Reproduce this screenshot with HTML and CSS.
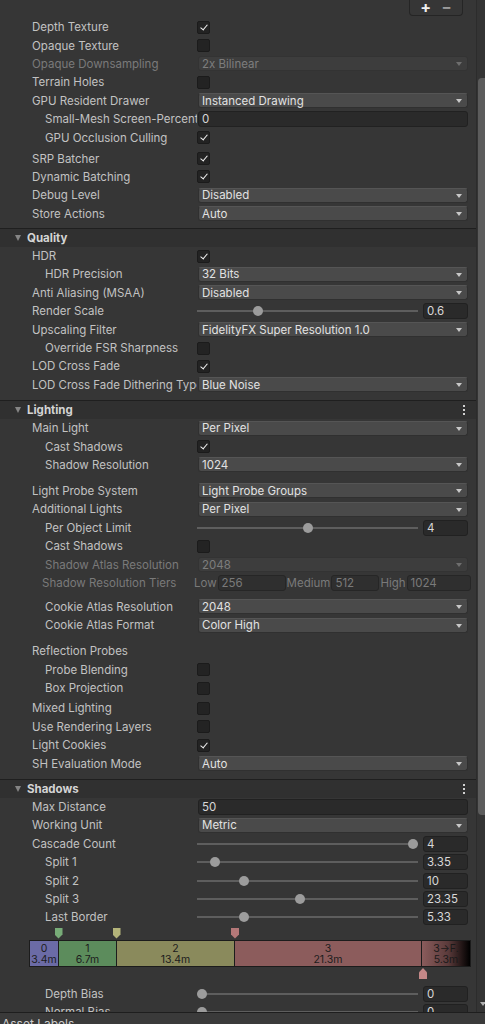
FILE: index.html
```html
<!DOCTYPE html>
<html>
<head>
<meta charset="utf-8">
<link rel="stylesheet" href="styles.css">
</head>
<body>
<div class="window">
  <div class="main">
    <div class="content">
      <div class="toolbar"><div class="addrem"><span class="plus">+</span><span class="minus">&minus;</span></div></div>

      <div class="row"><span class="label">Depth Texture</span><span class="ctrl"><span class="check on"></span></span></div>
      <div class="row"><span class="label">Opaque Texture</span><span class="ctrl"><span class="check"></span></span></div>
      <div class="row dis"><span class="label">Opaque Downsampling</span><span class="ctrl"><span class="dd">2x Bilinear</span></span></div>
      <div class="row"><span class="label">Terrain Holes</span><span class="ctrl"><span class="check"></span></span></div>
      <div class="row"><span class="label">GPU Resident Drawer</span><span class="ctrl"><span class="dd">Instanced Drawing</span></span></div>
      <div class="row"><span class="label ind">Small-Mesh Screen-Percentage</span><span class="ctrl"><span class="field">0</span></span></div>
      <div class="row"><span class="label ind">GPU Occlusion Culling</span><span class="ctrl"><span class="check on"></span></span></div>
      <div class="sp sp3"></div>
      <div class="row"><span class="label">SRP Batcher</span><span class="ctrl"><span class="check on"></span></span></div>
      <div class="row"><span class="label">Dynamic Batching</span><span class="ctrl"><span class="check on"></span></span></div>
      <div class="row"><span class="label">Debug Level</span><span class="ctrl"><span class="dd">Disabled</span></span></div>
      <div class="row"><span class="label">Store Actions</span><span class="ctrl"><span class="dd">Auto</span></span></div>

      <div class="sp sp5"></div>
      <div class="header"><span class="tri"></span><span class="htitle">Quality</span></div>
      <div class="row"><span class="label">HDR</span><span class="ctrl"><span class="check on"></span></span></div>
      <div class="row"><span class="label ind">HDR Precision</span><span class="ctrl"><span class="dd">32 Bits</span></span></div>
      <div class="row"><span class="label">Anti Aliasing (MSAA)</span><span class="ctrl"><span class="dd">Disabled</span></span></div>
      <div class="row"><span class="label">Render Scale</span><span class="ctrl"><span class="slider"><span class="track"><span class="knob" style="--p:0.264"></span></span></span><span class="num">0.6</span></span></div>
      <div class="row"><span class="label">Upscaling Filter</span><span class="ctrl"><span class="dd">FidelityFX Super Resolution 1.0</span></span></div>
      <div class="row"><span class="label ind">Override FSR Sharpness</span><span class="ctrl"><span class="check"></span></span></div>
      <div class="row"><span class="label">LOD Cross Fade</span><span class="ctrl"><span class="check on"></span></span></div>
      <div class="row"><span class="label">LOD Cross Fade Dithering Type</span><span class="ctrl"><span class="dd">Blue Noise</span></span></div>

      <div class="sp sp6"></div>
      <div class="header"><span class="tri"></span><span class="htitle">Lighting</span><span class="kebab"><i></i><i></i><i></i></span></div>
      <div class="row"><span class="label">Main Light</span><span class="ctrl"><span class="dd">Per Pixel</span></span></div>
      <div class="row"><span class="label ind">Cast Shadows</span><span class="ctrl"><span class="check on"></span></span></div>
      <div class="row"><span class="label ind">Shadow Resolution</span><span class="ctrl"><span class="dd">1024</span></span></div>
      <div class="sp sp8"></div>
      <div class="row"><span class="label">Light Probe System</span><span class="ctrl"><span class="dd">Light Probe Groups</span></span></div>
      <div class="row"><span class="label">Additional Lights</span><span class="ctrl"><span class="dd">Per Pixel</span></span></div>
      <div class="row"><span class="label ind">Per Object Limit</span><span class="ctrl"><span class="slider"><span class="track"><span class="knob" style="--p:0.5"></span></span></span><span class="num">4</span></span></div>
      <div class="row"><span class="label ind">Cast Shadows</span><span class="ctrl"><span class="check"></span></span></div>
      <div class="row dis"><span class="label ind">Shadow Atlas Resolution</span><span class="ctrl"><span class="dd">2048</span></span></div>
      <div class="row dis tiers"><span class="label tlabel">Shadow Resolution Tiers</span>
        <span class="tctrl"><span class="tl">Low</span><span class="tf tf1">256</span><span class="tl">Medium</span><span class="tf tf2">512</span><span class="tl">High</span><span class="tf tf3">1024</span></span></div>
      <div class="sp sp6b"></div>
      <div class="row"><span class="label ind">Cookie Atlas Resolution</span><span class="ctrl"><span class="dd">2048</span></span></div>
      <div class="row"><span class="label ind">Cookie Atlas Format</span><span class="ctrl"><span class="dd">Color High</span></span></div>
      <div class="sp sp8"></div>
      <div class="row"><span class="label">Reflection Probes</span><span class="ctrl"></span></div>
      <div class="row"><span class="label ind">Probe Blending</span><span class="ctrl"><span class="check"></span></span></div>
      <div class="row"><span class="label ind">Box Projection</span><span class="ctrl"><span class="check"></span></span></div>
      <div class="sp sp2"></div>
      <div class="row"><span class="label">Mixed Lighting</span><span class="ctrl"><span class="check"></span></span></div>
      <div class="row"><span class="label">Use Rendering Layers</span><span class="ctrl"><span class="check"></span></span></div>
      <div class="row"><span class="label">Light Cookies</span><span class="ctrl"><span class="check on"></span></span></div>
      <div class="row"><span class="label">SH Evaluation Mode</span><span class="ctrl"><span class="dd">Auto</span></span></div>

      <div class="sp sp6"></div>
      <div class="header"><span class="tri"></span><span class="htitle">Shadows</span><span class="kebab"><i></i><i></i><i></i></span></div>
      <div class="row"><span class="label">Max Distance</span><span class="ctrl"><span class="field">50</span></span></div>
      <div class="row"><span class="label">Working Unit</span><span class="ctrl"><span class="dd">Metric</span></span></div>
      <div class="row"><span class="label">Cascade Count</span><span class="ctrl"><span class="slider"><span class="track"><span class="knob" style="--p:1"></span></span></span><span class="num">4</span></span></div>
      <div class="row"><span class="label ind">Split 1</span><span class="ctrl"><span class="slider"><span class="track"><span class="knob" style="--p:0.062"></span></span></span><span class="num">3.35</span></span></div>
      <div class="row"><span class="label ind">Split 2</span><span class="ctrl"><span class="slider"><span class="track"><span class="knob" style="--p:0.198"></span></span></span><span class="num">10</span></span></div>
      <div class="row"><span class="label ind">Split 3</span><span class="ctrl"><span class="slider"><span class="track"><span class="knob" style="--p:0.464"></span></span></span><span class="num">23.35</span></span></div>
      <div class="row"><span class="label ind">Last Border</span><span class="ctrl"><span class="slider"><span class="track"><span class="knob" style="--p:0.198"></span></span></span><span class="num">5.33</span></span></div>

      <div class="cascade">
        <div class="mrow">
          <span class="mk mk-g" style="left:25.5px"></span>
          <span class="mk mk-y" style="left:83.5px"></span>
          <span class="mk mk-r" style="left:202px"></span>
        </div>
        <div class="cbar">
          <div class="seg s0"><span>0</span><span>3.4m</span></div>
          <div class="seg s1"><span>1</span><span>6.7m</span></div>
          <div class="seg s2"><span>2</span><span>13.4m</span></div>
          <div class="seg s3"><span>3</span><span>21.3m</span></div>
          <div class="seg s4"><span>3&rarr;F.</span><span>5.3m</span></div>
        </div>
        <div class="mrow">
          <span class="mk mk-p up" style="left:390px"></span>
        </div>
      </div>

      <div class="row"><span class="label ind">Depth Bias</span><span class="ctrl"><span class="slider"><span class="track"><span class="knob" style="--p:0"></span></span></span><span class="num">0</span></span></div>
      <div class="row"><span class="label ind">Normal Bias</span><span class="ctrl"><span class="slider"><span class="track"><span class="knob" style="--p:0"></span></span></span><span class="num">0</span></span></div>
    </div>
    <div class="scrollbar"><div class="thumb"></div><div class="down"></div></div>
  </div>
  <div class="footer">Asset Labels</div>
</div>
</body>
</html>
```

FILE: styles.css
```css
html, body {
  margin: 0;
  padding: 0;
  background: #363636;
}
body {
  font-family: "Inter", "Noto Sans", "Liberation Sans", sans-serif;
  font-size: 11.5px;
  color: #c2c2c2;
}
.window {
  width: 485px;
  height: 1024px;
  overflow: hidden;
  display: flex;
  flex-direction: column;
}
.main {
  height: 1012px;
  display: flex;
  overflow: hidden;
  flex: none;
}
.content {
  width: 476px;
  flex: none;
  overflow: hidden;
}
.scrollbar {
  width: 9px;
  flex: none;
  border-left: 1px solid #2c2c2c;
  box-sizing: border-box;
  position: relative;
  background: #343434;
}
.thumb {
  margin-top: 78px;
  margin-left: 1px;
  height: 737px;
  background: #5c5c5c;
  border-radius: 4px 0 0 4px;
}
.down {
  position: absolute;
  left: 3px;
  top: 1002px;
  width: 0;
  height: 0;
  border-left: 3px solid transparent;
  border-right: 3px solid transparent;
  border-top: 4px solid #b0b0b0;
}
.toolbar {
  height: 18px;
  display: flex;
  justify-content: flex-end;
  padding-right: 13px;
}
.addrem {
  width: 54px;
  height: 16px;
  box-sizing: border-box;
  border: 1px solid #252525;
  border-top: none;
  border-radius: 0 0 4px 4px;
  display: flex;
  align-items: center;
  justify-content: space-around;
  padding: 0 5px;
}
.plus {
  color: #f0f0f0;
  font-size: 16px;
  font-weight: 700;
  line-height: 14px;
  margin-top: -2px;
}
.minus {
  color: #9a9a9a;
  font-size: 15px;
  font-weight: 700;
  line-height: 14px;
  margin-top: -2px;
}
.row {
  height: 18.4px;
  display: flex;
  align-items: center;
}
.label {
  width: 197px;
  flex: none;
  box-sizing: border-box;
  padding-left: 32px;
  padding-right: 2px;
  white-space: nowrap;
  overflow: hidden;
}
.label.ind {
  padding-left: 45px;
}
.ctrl {
  width: 271px;
  flex: none;
  display: flex;
  align-items: center;
}
.check {
  width: 13px;
  height: 13px;
  box-sizing: border-box;
  background: #232323;
  border: 1px solid #1b1b1b;
  border-radius: 2px;
  position: relative;
}
.check.on::after {
  content: "";
  position: absolute;
  left: 3.5px;
  top: 1px;
  width: 3px;
  height: 6px;
  border: solid #f2f2f2;
  border-width: 0 1.6px 1.6px 0;
  transform: rotate(40deg);
}
.dd {
  width: 270px;
  height: 15px;
  box-sizing: border-box;
  margin-left: 1px;
  background: #4a4a4a;
  border: 1px solid #303030;
  border-top-color: #555555;
  border-radius: 3px;
  padding-left: 3px;
  color: #e2e2e2;
  display: flex;
  align-items: center;
  position: relative;
  white-space: nowrap;
}
.dd::after {
  content: "";
  position: absolute;
  right: 5px;
  top: 5px;
  border-left: 3.5px solid transparent;
  border-right: 3.5px solid transparent;
  border-top: 4px solid #c8c8c8;
}
.field {
  width: 270px;
  height: 16px;
  box-sizing: border-box;
  margin-left: 1px;
  background: #2a2a2a;
  border: 1px solid #212121;
  border-radius: 3px;
  padding-left: 3px;
  color: #d8d8d8;
  display: flex;
  align-items: center;
}
.slider {
  width: 221px;
  height: 12px;
  flex: none;
  display: flex;
  align-items: center;
}
.track {
  width: 100%;
  height: 2px;
  background: #5e5e5e;
  position: relative;
}
.knob {
  position: absolute;
  top: -4px;
  left: calc(var(--p) * (100% - 10px));
  width: 10px;
  height: 10px;
  border-radius: 50%;
  background: #9c9c9c;
}
.num {
  width: 45px;
  height: 16px;
  margin-left: 5px;
  box-sizing: border-box;
  background: #2a2a2a;
  border: 1px solid #212121;
  border-radius: 3px;
  padding-left: 3px;
  color: #d8d8d8;
  display: flex;
  align-items: center;
}
.dis .label,
.dis .tl {
  color: #7a7a7a;
}
.dis .dd {
  background: #3d3d3d;
  color: #7d7d7d;
  border-color: #333333;
}
.dis .dd::after {
  border-top-color: #6e6e6e;
}
.tlabel {
  padding-left: 42px;
  width: 194px;
}
.tctrl {
  display: flex;
  align-items: center;
  width: 277px;
  flex: none;
}
.tl {
  margin-right: 1px;
  white-space: nowrap;
  flex: none;
}
.tf {
  height: 16px;
  box-sizing: border-box;
  background: #2f2f2f;
  border: 1px solid #262626;
  border-radius: 3px;
  padding-left: 3px;
  color: #7a7a7a;
  display: flex;
  align-items: center;
  margin-right: 1px;
  flex: none;
}
.tf1 { width: 68px; }
.tf2 { width: 48px; }
.tf3 { flex: 1 1 auto; min-width: 0; margin-right: 0; }
.sp2 { height: 2px; }
.sp3 { height: 2.6px; }
.sp5 { height: 5px; }
.sp6 { height: 6px; }
.sp6b { height: 5.6px; }
.sp8 { height: 7.6px; }
.header {
  height: 18px;
  border-top: 1px solid #1f1f1f;
  background: #303030;
  display: flex;
  align-items: center;
  position: relative;
}
.tri {
  margin-left: 15px;
  width: 0;
  height: 0;
  border-left: 3.5px solid transparent;
  border-right: 3.5px solid transparent;
  border-top: 6px solid #858585;
}
.htitle {
  margin-left: 6px;
  font-weight: 700;
  font-size: 11.5px;
  color: #d4d4d4;
}
.kebab {
  margin-left: auto;
  margin-right: 11px;
  display: flex;
  flex-direction: column;
  gap: 2px;
}
.kebab i {
  display: block;
  width: 2px;
  height: 2px;
  background: #d0d0d0;
}
.cascade {
  height: 57.8px;
  padding-left: 29px;
  box-sizing: border-box;
}
.mrow {
  position: relative;
  height: 12.5px;
  width: 442px;
}
.mk {
  position: absolute;
  top: 1px;
  width: 8px;
  height: 11px;
  clip-path: polygon(0 0, 100% 0, 100% 62%, 50% 100%, 0 62%);
}
.mk.up {
  top: 1px;
  clip-path: polygon(50% 0, 100% 38%, 100% 100%, 0 100%, 0 38%);
}
.mk-g { background: #78ac78; }
.mk-y { background: #b4b47a; }
.mk-r { background: #b47878; }
.mk-p { background: #c48888; }
.cbar {
  margin-top: 1px;
  width: 442px;
  height: 27px;
  box-sizing: border-box;
  border: 1px solid #1c1c1c;
  background: #1c1c1c;
  display: flex;
  gap: 1px;
}
.seg {
  display: flex;
  flex-direction: column;
  align-items: center;
  justify-content: center;
  color: #1c1c1c;
  font-size: 10.5px;
  line-height: 11px;
  flex: none;
}
.s0 { width: 28px; background: #6b6ba6; }
.s1 { width: 57px; background: #5c8c5c; }
.s2 { width: 117px; background: #8a8a5c; }
.s3 { width: 186px; background: #8c5c5c; }
.s4 { width: 48px; background: linear-gradient(to right, #8a5c5c, #5a3a3a 55%, #000000); color: #1a1a1a; }
.footer {
  flex: none;
  height: 12px;
  border-top: 1px solid #1e1e1e;
  background: #3a3a3a;
  color: #cccccc;
  font-size: 12px;
  padding-left: 2px;
  padding-top: 4px;
  line-height: 14px;
  overflow: hidden;
}
```
